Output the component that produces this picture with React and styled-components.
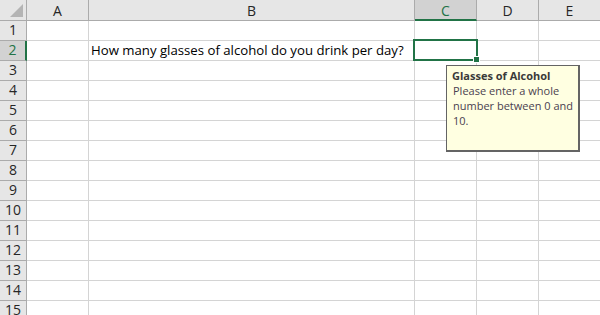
import React from "react";
import styled, { createGlobalStyle } from "styled-components";

const GlobalStyle = createGlobalStyle`
  html, body {
    margin: 0;
    padding: 0;
    background: #ffffff;
    overflow: hidden;
  }
`;

const columns = [
  { name: "A", width: 62 },
  { name: "B", width: 326 },
  { name: "C", width: 62, active: true },
  { name: "D", width: 62 },
  { name: "E", width: 62 },
];
const rows = Array.from({ length: 15 }, (_, i) => i + 1);

const Sheet = styled.div`
  display: grid;
  grid-template-columns: 27px ${columns.map((c) => c.width + "px").join(" ")};
  grid-template-rows: 21px repeat(15, 20px);
  width: 600px;
  height: 315px;
  overflow: hidden;
  font-family: "Open Sans", "Liberation Sans", sans-serif;
`;

const Corner = styled.div`
  position: relative;
  background: #e6e6e6;
  border-right: 1px solid #ababab;
  border-bottom: 1px solid #ababab;
  box-sizing: border-box;
  &::after {
    content: "";
    position: absolute;
    right: 3px;
    bottom: 3px;
    width: 0;
    height: 0;
    border-left: 13px solid transparent;
    border-bottom: 13px solid #b4b4b4;
  }
`;

const ColHeader = styled.div`
  box-sizing: border-box;
  display: flex;
  align-items: center;
  justify-content: center;
  font-size: 14px;
  background: ${(p) => (p.$active ? "#d2d2d2" : "#e6e6e6")};
  color: ${(p) => (p.$active ? "#217346" : "#262626")};
  border-right: 1px solid #ababab;
  border-bottom: ${(p) => (p.$active ? "2px solid #217346" : "1px solid #ababab")};
  padding-top: ${(p) => (p.$active ? "1px" : "0")};
`;

const RowHeader = styled.div`
  box-sizing: border-box;
  display: flex;
  align-items: flex-end;
  justify-content: center;
  padding-bottom: 1px;
  font-size: 14px;
  line-height: 18px;
  background: ${(p) => (p.$active ? "#d2d2d2" : "#e6e6e6")};
  color: ${(p) => (p.$active ? "#217346" : "#262626")};
  border-right: ${(p) => (p.$active ? "2px solid #217346" : "1px solid #ababab")};
  border-bottom: 1px solid #ababab;
`;

const Cell = styled.div`
  position: relative;
  box-sizing: border-box;
  border-right: 1px solid #d4d4d4;
  border-bottom: 1px solid #d4d4d4;
  display: flex;
  align-items: flex-end;
  padding: 0 2px 1px;
  font-size: 13.2px;
  line-height: 18px;
  color: #000;
  white-space: nowrap;
`;

const Selection = styled.div`
  position: absolute;
  left: -2px;
  top: -2px;
  right: -2px;
  bottom: -1px;
  border: 2px solid #217346;
  z-index: 2;
  &::after {
    content: "";
    position: absolute;
    right: -4px;
    bottom: -4px;
    width: 5px;
    height: 5px;
    background: #217346;
    border: 1px solid #ffffff;
  }
`;

const Tooltip = styled.div`
  position: absolute;
  left: 31px;
  top: 24px;
  width: 134px;
  height: 87px;
  box-sizing: border-box;
  background: #ffffe1;
  border: 2px solid #646464;
  border-width: 1px 2px 2px 1px;
  padding: 2px 4px 0 5px;
  z-index: 3;
  font-family: "Open Sans", "Liberation Sans", sans-serif;
  font-size: 11px;
  line-height: 15px;
  white-space: normal;
`;

const TipTitle = styled.div`
  font-weight: 700;
  color: #3a3a3a;
`;

const TipBody = styled.div`
  color: #4a4150;
  padding-left: 1px;
`;

export default function App() {
  return (
    <>
      <GlobalStyle />
      <Sheet>
        <Corner />
        {columns.map((c) => (
          <ColHeader key={c.name} $active={c.active}>
            {c.name}
          </ColHeader>
        ))}
        {rows.map((r) => (
          <React.Fragment key={r}>
            <RowHeader $active={r === 2}>{r}</RowHeader>
            {columns.map((c) => (
              <Cell key={c.name}>
                {r === 2 && c.name === "B" && "How many glasses of alcohol do you drink per day?"}
                {r === 2 && c.name === "C" && (
                  <>
                    <Selection />
                    <Tooltip>
                      <TipTitle>Glasses of Alcohol</TipTitle>
                      <TipBody>Please enter a whole number between 0 and 10.</TipBody>
                    </Tooltip>
                  </>
                )}
              </Cell>
            ))}
          </React.Fragment>
        ))}
      </Sheet>
    </>
  );
}
